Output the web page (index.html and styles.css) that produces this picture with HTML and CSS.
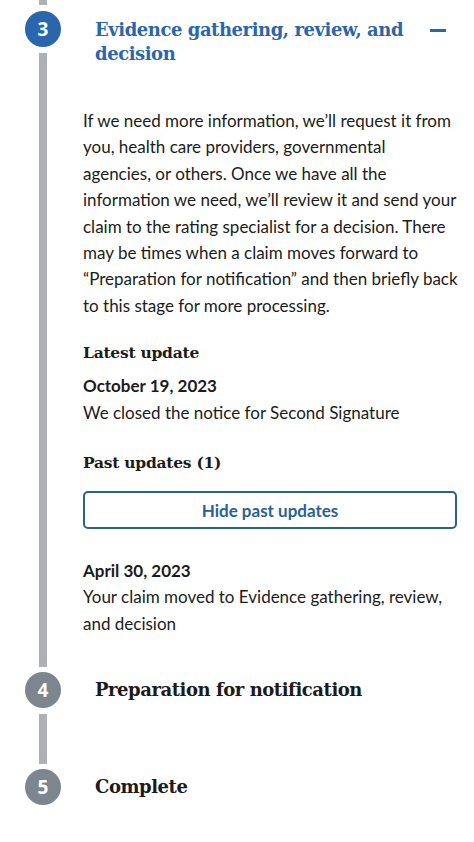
FILE: index.html
```html
<!DOCTYPE html>
<html lang="en">
<head>
    <meta charset="UTF-8">
    <meta name="viewport" content="width=device-width, initial-scale=1.0">
    <title>Claim status</title>
    <link rel="stylesheet" href="styles.css">
</head>
<body>
    <div class="rail-stub"></div>
    <ol class="steps">
        <li class="step current">
            <div class="rail">
                <span class="dot">3</span>
                <span class="line"></span>
            </div>
            <div class="step-main">
                <div class="step-head">
                    <h3 class="step-title">Evidence gathering, review, and decision</h3>
                    <span class="minus"></span>
                </div>
                <div class="step-content">
                    <p class="desc">If we need more information, we’ll request it from<br>
                    you, health care providers, governmental<br>
                    agencies, or others. Once we have all the<br>
                    information we need, we’ll review it and send your<br>
                    claim to the rating specialist for a decision. There<br>
                    may be times when a claim moves forward to<br>
                    “Preparation for notification” and then briefly back<br>
                    to this stage for more processing.</p>

                    <h4 class="label latest">Latest update</h4>
                    <div class="update">
                        <div class="date">October 19, 2023</div>
                        <div>We closed the notice for Second Signature</div>
                    </div>

                    <h4 class="label past">Past updates (1)</h4>
                    <button class="btn-outline">Hide past updates</button>

                    <div class="update older">
                        <div class="date">April 30, 2023</div>
                        <div>Your claim moved to Evidence gathering, review, and decision</div>
                    </div>
                </div>
            </div>
        </li>
        <li class="step">
            <div class="rail">
                <span class="dot">4</span>
                <span class="line"></span>
            </div>
            <div class="step-main">
                <h3 class="step-title plain">Preparation for notification</h3>
            </div>
        </li>
        <li class="step last">
            <div class="rail">
                <span class="dot">5</span>
            </div>
            <div class="step-main">
                <h3 class="step-title plain">Complete</h3>
            </div>
        </li>
    </ol>
</body>
</html>
```

FILE: styles.css
```css
*{
    box-sizing: border-box;
}
body{
    margin: 0;
    background-color: #fff;
    color: #1b1b1b;
    font-family: "Source Sans Pro", "Lato", sans-serif;
    font-size: 17px;
}
.rail-stub{
    width: 8px;
    height: 5px;
    margin-left: 39px;
    margin-bottom: 6px;
    background-color: #adb0b5;
}
.steps{
    list-style: none;
    margin: 0;
    padding: 0;
}
.step{
    display: flex;
}
.rail{
    width: 83px;
    padding-left: 3px;
    flex-shrink: 0;
    display: flex;
    flex-direction: column;
    align-items: center;
}
.dot{
    width: 36px;
    height: 36px;
    border-radius: 50%;
    background-color: #7d858e;
    color: #fff;
    font-family: "Open Sans", sans-serif;
    font-weight: 700;
    font-size: 19px;
    display: flex;
    justify-content: center;
    align-items: center;
    flex-shrink: 0;
}
.current .dot{
    background-color: #2a66ab;
}
.line{
    width: 8px;
    flex: 1;
    margin: 6px 0 5px;
    background-color: #adb0b5;
}
.step-main{
    flex: 1;
    padding-right: 17px;
}
.step-head{
    display: flex;
    justify-content: space-between;
    align-items: flex-start;
    padding-top: 7px;
}
.step-title{
    margin: 0;
    padding-left: 12px;
    font-family: "DejaVu Serif", serif;
    font-weight: 700;
    font-size: 18px;
    letter-spacing: -0.45px;
    line-height: 24px;
    color: #2a66ab;
}
.step-title.plain{
    color: #1b1b1b;
    line-height: 36px;
    padding-bottom: 61px;
}
.minus{
    width: 16px;
    height: 3px;
    margin-top: 11px;
    margin-right: 11px;
    background-color: #2a66ab;
    flex-shrink: 0;
}
.step-content{
    padding-top: 42px;
    padding-bottom: 35px;
    line-height: 26.4px;
}
.desc{
    margin: 0 -14px 0 0;
}
.label{
    margin: 22px 0 0;
    font-family: "DejaVu Serif", serif;
    font-weight: 700;
    font-size: 15.5px;
    letter-spacing: -0.25px;
    line-height: 24px;
}
.label.past{
    margin-top: 25px;
}
.update{
    margin-top: 8px;
}
.update.older{
    margin-top: 29px;
}
.date{
    font-weight: 700;
}
.btn-outline{
    display: block;
    width: 100%;
    height: 38px;
    margin-top: 16px;
    background-color: #fff;
    border: 2px solid #2a5f99;
    border-radius: 5px;
    color: #2a5f99;
    font-family: "Source Sans Pro", "Lato", sans-serif;
    font-weight: 700;
    font-size: 17px;
}
```
